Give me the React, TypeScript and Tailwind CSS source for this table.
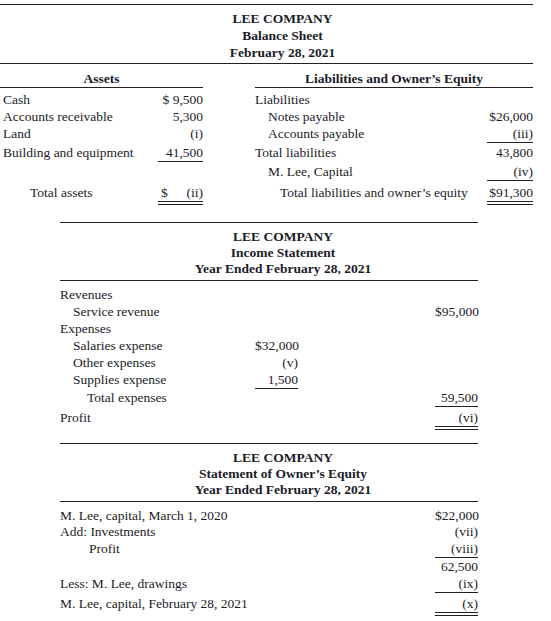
import React from "react";

const L = "border-[#231f20]";

function Amt({
  children,
  w,
  line,
  className = "",
}: {
  children?: React.ReactNode;
  w: string;
  line?: "single" | "double";
  className?: string;
}) {
  if (line === "double") {
    return (
      <div className={`${w} shrink-0 border-b ${L} pb-[2px] ${className}`}>
        <div className={`border-b ${L} text-right`}>{children}</div>
      </div>
    );
  }
  return (
    <div className={`${w} shrink-0 text-right ${line === "single" ? `border-b ${L}` : ""} ${className}`}>
      {children}
    </div>
  );
}

export default function App() {
  return (
    <div
      className="w-[551px] h-[621px] bg-white text-[#1b1b28] text-[13.5px] overflow-hidden whitespace-nowrap"
      style={{ fontFamily: '"Liberation Serif", "Times New Roman", serif' }}
    >
      {/* Balance sheet */}
      <div className="w-[533px] pt-[4px]">
        <div className={`border-t ${L} border-b pt-[5px] pb-[2px] pl-[32px] text-center font-bold leading-[17px]`}>
          <div>LEE COMPANY</div>
          <div>Balance Sheet</div>
          <div>February 28, 2021</div>
        </div>
        <div className="flex gap-[52px] leading-[17px]">
          {/* Assets */}
          <div className="w-[203px]">
            <div className={`border-b ${L} pt-[6px] text-center font-bold`}>Assets</div>
            <div className="pt-[3px] pl-[3px]">
              <div className="flex items-start justify-between">
                <span>Cash</span>
                <Amt w="w-[45px]">$ 9,500</Amt>
              </div>
              <div className="flex items-start justify-between">
                <span>Accounts receivable</span>
                <Amt w="w-[45px]">5,300</Amt>
              </div>
              <div className="flex items-start justify-between">
                <span>Land</span>
                <Amt w="w-[45px]">(i)</Amt>
              </div>
              <div className="flex items-start justify-between pt-[2px]">
                <span>Building and equipment</span>
                <Amt w="w-[45px]" line="single">41,500</Amt>
              </div>
              <div className="h-[19px]" />
              <div className="flex items-start justify-between pt-[3px]">
                <span className="pl-[27px]">Total assets</span>
                <div className={`w-[45px] border-b ${L} pb-[2px]`}>
                  <div className={`flex justify-between border-b ${L} pl-[3px]`}>
                    <span>$</span>
                    <span>(ii)</span>
                  </div>
                </div>
              </div>
            </div>
          </div>
          {/* Liabilities */}
          <div className="w-[278px]">
            <div className={`border-b ${L} pt-[6px] text-center font-bold`}>Liabilities and Owner’s Equity</div>
            <div className="pt-[3px]">
              <div>Liabilities</div>
              <div className="flex items-start justify-between">
                <span className="pl-[13px]">Notes payable</span>
                <Amt w="w-[46px]">$26,000</Amt>
              </div>
              <div className="flex items-start justify-between">
                <span className="pl-[13px]">Accounts payable</span>
                <Amt w="w-[46px]" line="single">(iii)</Amt>
              </div>
              <div className="flex items-start justify-between pt-[1px]">
                <span>Total liabilities</span>
                <Amt w="w-[46px]">43,800</Amt>
              </div>
              <div className="flex items-start justify-between pt-[2px]">
                <span className="pl-[13px]">M. Lee, Capital</span>
                <Amt w="w-[46px]" line="single">(iv)</Amt>
              </div>
              <div className="flex items-start justify-between pt-[3px]">
                <span className="pl-[25px]">Total liabilities and owner’s equity</span>
                <Amt w="w-[46px]" line="double">$91,300</Amt>
              </div>
            </div>
          </div>
        </div>
      </div>

      {/* Income statement */}
      <div className="w-[418px] ml-[60px] mt-[17px]">
        <div className={`border-t ${L} border-b pt-[6px] pb-[3px] pl-[28px] text-center font-bold leading-[16px]`}>
          <div>LEE COMPANY</div>
          <div>Income Statement</div>
          <div>Year Ended February 28, 2021</div>
        </div>
        <div className="pt-[5px] leading-[17px]">
          <div>Revenues</div>
          <div className="flex items-start">
            <span className="w-[195px] pl-[13px]">Service revenue</span>
            <Amt w="w-[43px]" />
            <div className="w-[137px]" />
            <Amt w="w-[43px]">$95,000</Amt>
          </div>
          <div>Expenses</div>
          <div className="flex items-start">
            <span className="w-[195px] pl-[13px]">Salaries expense</span>
            <Amt w="w-[43px]">$32,000</Amt>
          </div>
          <div className="flex items-start">
            <span className="w-[195px] pl-[13px]">Other expenses</span>
            <Amt w="w-[43px]">(v)</Amt>
          </div>
          <div className="flex items-start">
            <span className="w-[195px] pl-[13px]">Supplies expense</span>
            <Amt w="w-[43px]" line="single">1,500</Amt>
          </div>
          <div className="flex items-start">
            <span className="w-[195px] pl-[27px]">Total expenses</span>
            <Amt w="w-[43px]" />
            <div className="w-[137px]" />
            <Amt w="w-[43px]" line="single">59,500</Amt>
          </div>
          <div className="flex items-start pt-[2px]">
            <span className="w-[375px]">Profit</span>
            <Amt w="w-[43px]" line="double">(vi)</Amt>
          </div>
        </div>
      </div>

      {/* Owner's equity */}
      <div className="w-[418px] ml-[60px] mt-[13px]">
        <div className={`border-t ${L} border-b pt-[6px] pb-[3px] pl-[28px] text-center font-bold leading-[16px]`}>
          <div>LEE COMPANY</div>
          <div>Statement of Owner’s Equity</div>
          <div>Year Ended February 28, 2021</div>
        </div>
        <div className="pt-[6px] leading-[16px]">
          <div className="flex items-start justify-between">
            <span>M. Lee, capital, March 1, 2020</span>
            <Amt w="w-[43px]">$22,000</Amt>
          </div>
          <div className="flex items-start justify-between">
            <span>Add: Investments</span>
            <Amt w="w-[43px]">(vii)</Amt>
          </div>
          <div className="flex items-start justify-between pt-[1px]">
            <span className="pl-[29px]">Profit</span>
            <Amt w="w-[43px]" line="single">(viii)</Amt>
          </div>
          <div className="flex items-start justify-between pt-[1px]">
            <span />
            <Amt w="w-[43px]">62,500</Amt>
          </div>
          <div className="flex items-start justify-between pt-[1px]">
            <span>Less: M. Lee, drawings</span>
            <Amt w="w-[43px]" line="single">(ix)</Amt>
          </div>
          <div className="flex items-start justify-between pt-[3px]">
            <span>M. Lee, capital, February 28, 2021</span>
            <Amt w="w-[43px]" line="double">(x)</Amt>
          </div>
        </div>
      </div>
    </div>
  );
}
